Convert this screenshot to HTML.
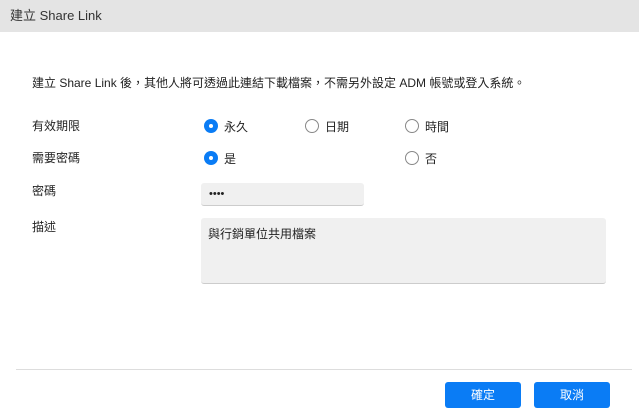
<!DOCTYPE html>
<html><head><meta charset="utf-8"><style>
*{margin:0;padding:0;box-sizing:border-box}
body{width:639px;height:416px;background:#fff;font-family:"Liberation Sans","Noto Sans CJK TC",sans-serif;color:#222;position:relative;overflow:hidden;font-size:12px}
.hdr{position:absolute;left:0;top:0;width:639px;height:32px;background:#e4e4e4;font-size:13px;line-height:32px;padding-left:10px;color:#333}
.a{position:absolute;white-space:nowrap;line-height:16px}
.r{position:absolute;width:14px;height:14px;border-radius:50%;border:1.5px solid #888;background:#fff}
.r.on{border:none;background:#0a7cf5}
.r.on::after{content:"";position:absolute;left:5px;top:5px;width:4px;height:4px;border-radius:50%;background:#fff}
.inp{position:absolute;background:#f0f0f0;border-radius:3px;border-bottom:1px solid #ccc}
.btn{position:absolute;top:382px;height:26px;width:76px;background:#0a7cf5;color:#fff;border-radius:3px;text-align:center;line-height:26px;font-size:12px}
</style></head><body>
<div class="hdr">建立 Share Link</div>
<div class="a" style="left:32px;top:75px">建立 Share Link 後，其他人將可透過此連結下載檔案，不需另外設定 ADM 帳號或登入系統。</div>
<div class="a" style="left:32px;top:118px">有效期限</div>
<div class="r on" style="left:204px;top:119px"></div><div class="a" style="left:224px;top:119px">永久</div>
<div class="r" style="left:305px;top:119px"></div><div class="a" style="left:325px;top:119px">日期</div>
<div class="r" style="left:405px;top:119px"></div><div class="a" style="left:425px;top:119px">時間</div>
<div class="a" style="left:32px;top:150px">需要密碼</div>
<div class="r on" style="left:204px;top:151px"></div><div class="a" style="left:224px;top:151px">是</div>
<div class="r" style="left:405px;top:151px"></div><div class="a" style="left:425px;top:151px">否</div>
<div class="a" style="left:32px;top:183px">密碼</div>
<div class="inp" style="left:201px;top:183px;width:163px;height:23px"><span class="a" style="left:8px;top:3px;font-size:11px;letter-spacing:0px">••••</span></div>
<div class="a" style="left:32px;top:219px">描述</div>
<div class="inp" style="left:201px;top:218px;width:405px;height:66px"><span class="a" style="left:7px;top:8px">與行銷單位共用檔案</span></div>
<div class="a" style="left:16px;top:369px;width:616px;height:1px;background:#ddd"></div>
<div class="btn" style="left:445px">確定</div>
<div class="btn" style="left:534px">取消</div>
</body></html>
